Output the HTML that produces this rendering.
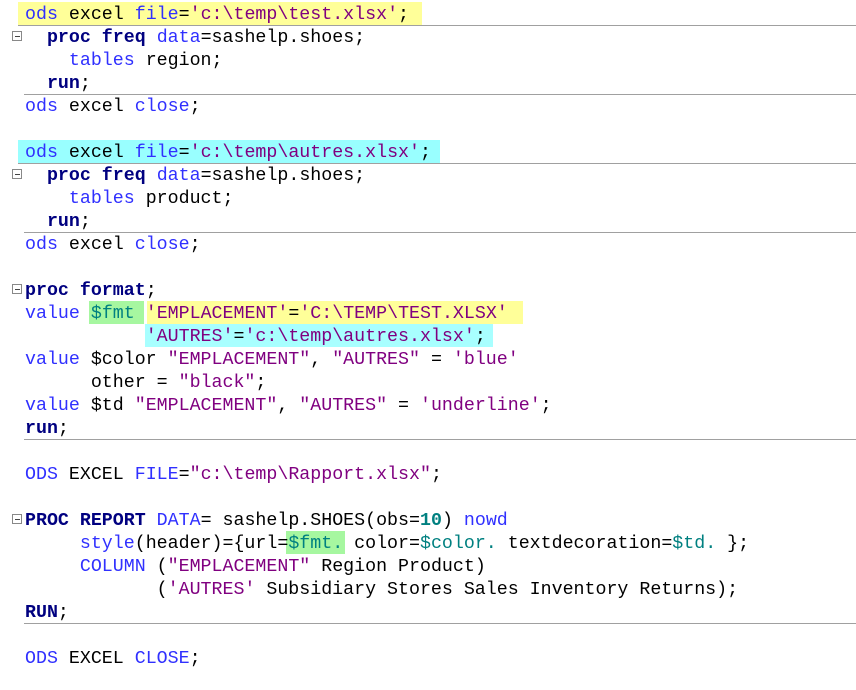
<!DOCTYPE html>
<html><head><meta charset="utf-8">
<style>
html,body{margin:0;padding:0;background:#fff;width:856px;height:690px;overflow:hidden;position:relative}
.l{position:absolute;left:25px;height:23px;line-height:23px;font-family:"Liberation Mono",monospace;font-size:18.3px;white-space:pre;color:#000;transform:translateY(2px)}
.sep{position:absolute;left:24px;right:0;height:1px;background:#a0a0a0}
.hl{position:absolute;height:23px}
.box{position:absolute;left:12px;width:8px;height:8px;border:1px solid #888;background:#fff}
.box:after{content:"";position:absolute;left:2px;top:4px;width:5px;height:1px;background:#444}
.k{color:#3030ff}
.p{color:#000080;font-weight:bold}
.s{color:#800080}
.f{color:#008080}
.n{color:#008080;font-weight:bold}
</style></head><body>
<div class="hl" style="left:18px;width:404px;top:2px;background:#ffff99"></div>
<div class="hl" style="left:18px;width:422px;top:140px;background:#99ffff"></div>
<div class="hl" style="left:89px;width:55px;top:301px;background:#a6f7a0"></div>
<div class="hl" style="left:147px;width:376px;top:301px;background:#ffff99"></div>
<div class="hl" style="left:145px;width:348px;top:324px;background:#a8ffff"></div>
<div class="hl" style="left:286px;width:59px;top:531px;background:#a6f7a0"></div>

<div class="sep" style="top:25px;left:18px"></div>
<div class="sep" style="top:94px"></div>
<div class="sep" style="top:163px;left:18px"></div>
<div class="sep" style="top:232px"></div>
<div class="sep" style="top:439px"></div>
<div class="sep" style="top:623px"></div>

<div class="box" style="top:31px"></div>
<div class="box" style="top:169px"></div>
<div class="box" style="top:284px"></div>
<div class="box" style="top:514px"></div>

<div class="l" style="top:2px"><span class="k">ods</span> excel <span class="k">file</span>=<span class="s">'c:\temp\test.xlsx'</span>;</div>
<div class="l" style="top:25px">  <span class="p">proc freq</span> <span class="k">data</span>=sashelp.shoes;</div>
<div class="l" style="top:48px">    <span class="k">tables</span> region;</div>
<div class="l" style="top:71px">  <span class="p">run</span>;</div>
<div class="l" style="top:94px"><span class="k">ods</span> excel <span class="k">close</span>;</div>

<div class="l" style="top:140px"><span class="k">ods</span> excel <span class="k">file</span>=<span class="s">'c:\temp\autres.xlsx'</span>;</div>
<div class="l" style="top:163px">  <span class="p">proc freq</span> <span class="k">data</span>=sashelp.shoes;</div>
<div class="l" style="top:186px">    <span class="k">tables</span> product;</div>
<div class="l" style="top:209px">  <span class="p">run</span>;</div>
<div class="l" style="top:232px"><span class="k">ods</span> excel <span class="k">close</span>;</div>

<div class="l" style="top:278px"><span class="p">proc format</span>;</div>
<div class="l" style="top:301px"><span class="k">value</span> <span class="f">$fmt</span> <span class="s">'EMPLACEMENT'</span>=<span class="s">'C:\TEMP\TEST.XLSX'</span></div>
<div class="l" style="top:324px">           <span class="s">'AUTRES'</span>=<span class="s">'c:\temp\autres.xlsx'</span>;</div>
<div class="l" style="top:347px"><span class="k">value</span> $color <span class="s">"EMPLACEMENT"</span>, <span class="s">"AUTRES"</span> = <span class="s">'blue'</span></div>
<div class="l" style="top:370px">      other = <span class="s">"black"</span>;</div>
<div class="l" style="top:393px"><span class="k">value</span> $td <span class="s">"EMPLACEMENT"</span>, <span class="s">"AUTRES"</span> = <span class="s">'underline'</span>;</div>
<div class="l" style="top:416px"><span class="p">run</span>;</div>

<div class="l" style="top:462px"><span class="k">ODS</span> EXCEL <span class="k">FILE</span>=<span class="s">"c:\temp\Rapport.xlsx"</span>;</div>

<div class="l" style="top:508px"><span class="p">PROC REPORT</span> <span class="k">DATA</span>= sashelp.SHOES(obs=<span class="n">10</span>) <span class="k">nowd</span></div>
<div class="l" style="top:531px">     <span class="k">style</span>(header)={url=<span class="f">$fmt.</span> color=<span class="f">$color.</span> textdecoration=<span class="f">$td.</span> };</div>
<div class="l" style="top:554px">     <span class="k">COLUMN</span> (<span class="s">"EMPLACEMENT"</span> Region Product)</div>
<div class="l" style="top:577px">            (<span class="s">'AUTRES'</span> Subsidiary Stores Sales Inventory Returns);</div>
<div class="l" style="top:600px"><span class="p">RUN</span>;</div>

<div class="l" style="top:646px"><span class="k">ODS</span> EXCEL <span class="k">CLOSE</span>;</div>
</body></html>
